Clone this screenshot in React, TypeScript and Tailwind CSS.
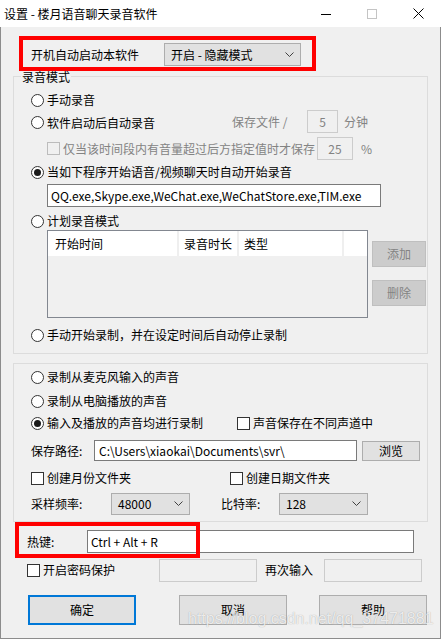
import React from 'react';

const font = "font-['Noto_Sans_CJK_SC','Microsoft_YaHei',sans-serif]";

function Radio({ checked, children, className = '' }: { checked?: boolean; children: React.ReactNode; className?: string }) {
  return (
    <div className={`flex items-center ${className}`}>
      <span className="w-[13px] h-[13px] shrink-0 rounded-full border border-[#333333] bg-white flex items-center justify-center">
        {checked && <span className="w-[7px] h-[7px] rounded-full bg-[#1a1a1a]" />}
      </span>
      <span className="ml-[3px] whitespace-nowrap">{children}</span>
    </div>
  );
}

function Check({ disabled, children, className = '' }: { disabled?: boolean; children: React.ReactNode; className?: string }) {
  return (
    <div className={`flex items-center ${className}`}>
      <span
        className={`w-[13px] h-[13px] shrink-0 border ${disabled ? 'border-[#bcbcbc] bg-[#f0f0f0]' : 'border-[#333333] bg-white'}`}
      />
      <span className={`ml-[3px] whitespace-nowrap ${disabled ? 'text-[#838383]' : ''}`}>{children}</span>
    </div>
  );
}

function Chevron() {
  return (
    <svg width="9" height="6" viewBox="0 0 9 6" className="shrink-0">
      <polyline points="0.5,0.5 4.5,4.5 8.5,0.5" fill="none" stroke="#404040" strokeWidth="1" />
    </svg>
  );
}

function Combo({ value, className = '' }: { value: string; className?: string }) {
  return (
    <div className={`flex items-center justify-between bg-[#e1e1e1] border border-[#adadad] pl-[6px] pr-[6px] ${className}`}>
      <span className="whitespace-nowrap">{value}</span>
      <Chevron />
    </div>
  );
}

function Button({ children, className = '', disabled, focused }: { children: React.ReactNode; className?: string; disabled?: boolean; focused?: boolean }) {
  const look = disabled
    ? 'bg-[#cccccc] border border-[#bfbfbf] text-[#838383]'
    : focused
    ? 'bg-[#e1e1e1] border-2 border-[#0078d7]'
    : 'bg-[#e1e1e1] border border-[#adadad]';
  return <div className={`flex items-center justify-center ${look} ${className}`}>{children}</div>;
}

export default function App() {
  return (
    <div
      className={`relative w-[441px] h-[639px] overflow-hidden bg-[#f0f0f0] text-[12px] leading-[16px] text-black ${font} shadow-[inset_1px_0_0_#8c8c8c,inset_-1px_0_0_#8c8c8c,inset_0_-1px_0_#8c8c8c]`}
    >
      {/* Title bar */}
      <div className="h-[27px] bg-white flex items-center">
        <span className="pl-[4px] whitespace-nowrap">设置 - 楼月语音聊天录音软件</span>
        <div className="ml-auto flex h-full">
          <div className="w-[46px] flex items-center justify-center">
            <svg width="10" height="10" viewBox="0 0 10 10">
              <line x1="0" y1="5.5" x2="10" y2="5.5" stroke="#000" strokeWidth="1" />
            </svg>
          </div>
          <div className="w-[46px] flex items-center justify-center">
            <svg width="10" height="10" viewBox="0 0 10 10">
              <rect x="0.5" y="0.5" width="9" height="9" fill="none" stroke="#c4c4c4" strokeWidth="1" />
            </svg>
          </div>
          <div className="w-[46px] flex items-center justify-center">
            <svg width="11" height="11" viewBox="0 0 11 11">
              <line x1="0.5" y1="0.5" x2="10.5" y2="10.5" stroke="#000" strokeWidth="1" />
              <line x1="10.5" y1="0.5" x2="0.5" y2="10.5" stroke="#000" strokeWidth="1" />
            </svg>
          </div>
        </div>
      </div>

      {/* Autostart row */}
      <div className="mt-[16px] h-[23px] flex items-center pl-[31px]">
        <span className="w-[133px] whitespace-nowrap">开机自动启动本软件</span>
        <Combo value="开启 - 隐藏模式" className="w-[137px] h-[23px]" />
      </div>

      {/* Group: 录音模式 */}
      <div className="relative mt-[10px] ml-[13px] w-[415px] h-[278px] border border-[#dcdcdc] flex flex-col pl-[17px]">
        <span className="absolute -top-[8px] left-[7px] px-[1px] bg-[#f0f0f0] whitespace-nowrap">录音模式</span>

        <Radio className="mt-[13px] h-[20px]">手动录音</Radio>

        <div className="h-[23px] flex items-center">
          <Radio className="w-[201px] mt-[2px]">软件启动后自动录音</Radio>
          <span className="w-[75px] text-[#838383] whitespace-nowrap">保存文件 /</span>
          <div className="w-[31px] h-[23px] border border-[#cccccc] flex items-center justify-center text-[#838383]">5</div>
          <span className="ml-[6px] text-[#838383] whitespace-nowrap">分钟</span>
        </div>

        <div className="mt-[4px] h-[23px] flex items-center pl-[16px]">
          <Check disabled className="w-[270px]">仅当该时间段内有音量超过后方指定值时才保存</Check>
          <div className="w-[36px] h-[23px] border border-[#cccccc] flex items-center justify-center text-[#838383]">25</div>
          <span className="ml-[8px] text-[#838383]">%</span>
        </div>

        <Radio checked className="mt-[2px] h-[20px]">当如下程序开始语音/视频聊天时自动开始录音</Radio>

        <div className="mt-[2px] ml-[16px] w-[334px] h-[23px] bg-white border border-[#7a7a7a] flex items-center pl-[3px] whitespace-nowrap overflow-hidden">
          QQ.exe,Skype.exe,WeChat.exe,WeChatStore.exe,TIM.exe
        </div>

        <Radio className="mt-[5px] h-[18px]">计划录音模式</Radio>

        <div className="flex ml-[16px]">
          <div className="w-[321px] h-[88px] border border-[#828790] bg-[#f0f0f0] flex flex-col">
            <div className="h-[25px] bg-white flex items-center">
              <span className="w-[131px] h-full pl-[7px] flex items-center border-r-2 border-[#efefef]">开始时间</span>
              <span className="w-[60px] h-full pl-[5px] flex items-center border-r-2 border-[#efefef] whitespace-nowrap">录音时长</span>
              <span className="w-[105px] h-full pl-[5px] flex items-center border-r-2 border-[#efefef]">类型</span>
            </div>
          </div>
          <div className="ml-[4px] flex flex-col">
            <Button disabled className="mt-[11px] w-[54px] h-[26px]">添加</Button>
            <Button disabled className="mt-[13px] w-[54px] h-[26px]">删除</Button>
          </div>
        </div>

        <Radio className="mt-[7px] h-[20px]">手动开始录制，并在设定时间后自动停止录制</Radio>
      </div>

      {/* Group: 录音源 */}
      <div className="mt-[9px] ml-[13px] w-[415px] h-[159px] border border-[#dcdcdc] flex flex-col pl-[17px]">
        <Radio className="mt-[3px] h-[20px]">录制从麦克风输入的声音</Radio>
        <Radio className="mt-[4px] h-[20px]">录制从电脑播放的声音</Radio>
        <div className="mt-[2px] h-[20px] flex items-center">
          <Radio checked className="w-[206px]">输入及播放的声音均进行录制</Radio>
          <Check>声音保存在不同声道中</Check>
        </div>
        <div className="mt-[7px] h-[21px] flex items-center">
          <span className="w-[63px] whitespace-nowrap">保存路径:</span>
          <div className="w-[263px] h-[21px] bg-white border border-[#7a7a7a] flex items-center pl-[4px] whitespace-nowrap">
            C:\Users\xiaokai\Documents\svr\
          </div>
          <Button className="ml-[5px] w-[58px] h-[20px]">浏览</Button>
        </div>
        <div className="mt-[7px] h-[20px] flex items-center">
          <Check className="w-[199px]">创建月份文件夹</Check>
          <Check>创建日期文件夹</Check>
        </div>
        <div className="mt-[5px] h-[22px] flex items-center">
          <span className="w-[80px] whitespace-nowrap">采样频率:</span>
          <Combo value="48000" className="w-[79px] h-[22px]" />
          <span className="ml-[31px] w-[58px] whitespace-nowrap">比特率:</span>
          <Combo value="128" className="w-[89px] h-[22px]" />
        </div>
      </div>

      {/* Hotkey */}
      <div className="mt-[8px] h-[23px] flex items-center pl-[27px]">
        <span className="w-[60px]">热键:</span>
        <div className="w-[327px] h-[23px] bg-white border border-[#7a7a7a] flex items-center pl-[3px] whitespace-nowrap">
          Ctrl + Alt + R
        </div>
      </div>

      {/* Password */}
      <div className="mt-[6px] h-[23px] flex items-start pl-[27px]">
        <Check className="mt-[3px] w-[132px]">开启密码保护</Check>
        <div className="w-[98px] h-[23px] border border-[#cccccc] bg-[#f0f0f0]" />
        <span className="ml-[8px] w-[59px] mt-[3px] whitespace-nowrap">再次输入</span>
        <div className="w-[98px] h-[23px] border border-[#cccccc] bg-[#f0f0f0]" />
      </div>

      {/* Buttons */}
      <div className="mt-[13px] flex pl-[28px]">
        <Button focused className="w-[108px] h-[30px]">确定</Button>
        <Button className="ml-[43px] w-[108px] h-[30px]">取消</Button>
        <Button className="ml-[32px] w-[108px] h-[30px]">帮助</Button>
      </div>

      {/* Annotation boxes */}
      <div className="absolute left-[19px] top-[36px] w-[297px] h-[35px] border-4 border-[#ff0000] pointer-events-none" />
      <div className="absolute left-[15px] top-[522px] w-[185px] h-[36px] border-4 border-[#ff0000] pointer-events-none" />

      {/* Watermark */}
      <span className="absolute left-[188px] top-[611px] text-[16px] leading-[16px] font-['Liberation_Sans',Arial,sans-serif] text-white/80 [text-shadow:0_0_1px_rgba(0,0,0,0.35)] whitespace-nowrap pointer-events-none">
        https://blog.csdn.net/qq_37471881
      </span>
    </div>
  );
}
